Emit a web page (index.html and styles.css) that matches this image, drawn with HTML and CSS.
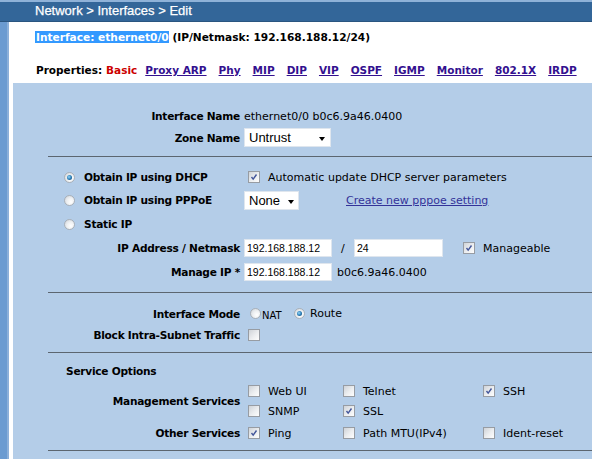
FILE: index.html
```html
<!DOCTYPE html>
<html>
<head>
<meta charset="utf-8">
<link rel="stylesheet" href="styles.css">
</head>
<body>
<div class="topbar">Network &gt; Interfaces &gt; Edit</div>
<div class="main">
  <div class="strip"></div>
  <div class="content">
    <div class="heading"><span class="sel">Interface: ethernet0/0</span> (IP/Netmask: 192.168.188.12/24)</div>
    <div class="props">
      <span class="plabel">Properties:</span>
      <span class="cur">Basic</span>
      <a class="plink">Proxy ARP</a>
      <a class="plink">Phy</a>
      <a class="plink">MIP</a>
      <a class="plink">DIP</a>
      <a class="plink">VIP</a>
      <a class="plink">OSPF</a>
      <a class="plink">IGMP</a>
      <a class="plink">Monitor</a>
      <a class="plink">802.1X</a>
      <a class="plink">IRDP</a>
    </div>
    <div class="panel">
      <div class="sec sec1">
        <div class="row h22"><div class="lbl">Interface Name</div><div class="ctl">ethernet0/0 b0c6.9a46.0400</div></div>
        <div class="row h21"><div class="lbl">Zone Name</div><div class="ctl"><span class="select zone">Untrust<span class="arrow"></span></span></div></div>
      </div>
      <div class="sep"></div>
      <div class="sec sec2">
        <div class="row h22"><div class="opt"><span class="radio on"></span><b>Obtain IP using DHCP</b></div><div class="ctl"><span class="cb on"><svg viewBox="0 0 12 12"><path d="M3 6 L5 8.5 L9 3" /></svg></span><span class="cbl">Automatic update DHCP server parameters</span></div></div>
        <div class="row h24"><div class="opt"><span class="radio"></span><b>Obtain IP using PPPoE</b></div><div class="ctl"><span class="select none">None<span class="arrow"></span></span><a class="link">Create new pppoe setting</a></div></div>
        <div class="row h24"><div class="opt"><span class="radio"></span><b>Static IP</b></div><div class="ctl"></div></div>
        <div class="row h24"><div class="lbl">IP Address / Netmask</div><div class="ctl"><span class="input ip">192.168.188.12</span><span class="slash">/</span><span class="input mask">24</span><span class="cb on manage"><svg viewBox="0 0 12 12"><path d="M3 6 L5 8.5 L9 3" /></svg></span><span class="cbl">Manageable</span></div></div>
        <div class="row h24"><div class="lbl">Manage IP *</div><div class="ctl"><span class="input ip">192.168.188.12</span><span class="mac">b0c6.9a46.0400</span></div></div>
      </div>
      <div class="sep"></div>
      <div class="sec sec3">
        <div class="row h21"><div class="lbl">Interface Mode</div><div class="ctl"><span class="radio nat"></span><span class="small">NAT</span><span class="radio on"></span><span class="rl">Route</span></div></div>
        <div class="row h21"><div class="lbl">Block Intra-Subnet Traffic</div><div class="ctl"><span class="cb"></span></div></div>
      </div>
      <div class="sep"></div>
      <div class="sec sec4">
        <div class="title">Service Options</div>
        <div class="row mg"><div class="lbl">Management Services</div>
          <div class="svc">
            <div class="item"><span class="cb"></span><span class="cbl">Web UI</span></div>
            <div class="item"><span class="cb"></span><span class="cbl">Telnet</span></div>
            <div class="item"><span class="cb on"><svg viewBox="0 0 12 12"><path d="M3 6 L5 8.5 L9 3" /></svg></span><span class="cbl">SSH</span></div>
            <div class="item"><span class="cb"></span><span class="cbl">SNMP</span></div>
            <div class="item"><span class="cb on"><svg viewBox="0 0 12 12"><path d="M3 6 L5 8.5 L9 3" /></svg></span><span class="cbl">SSL</span></div>
            <div class="item"></div>
          </div>
        </div>
        <div class="row h24"><div class="lbl">Other Services</div>
          <div class="svc one">
            <div class="item"><span class="cb on"><svg viewBox="0 0 12 12"><path d="M3 6 L5 8.5 L9 3" /></svg></span><span class="cbl">Ping</span></div>
            <div class="item"><span class="cb"></span><span class="cbl">Path MTU(IPv4)</span></div>
            <div class="item"><span class="cb"></span><span class="cbl">Ident-reset</span></div>
          </div>
        </div>
      </div>
      <div class="sep"></div>
    </div>
  </div>
</div>
</body>
</html>
```

FILE: styles.css
```css
* { box-sizing: border-box; }
html, body { margin: 0; padding: 0; }
body {
  width: 592px;
  height: 459px;
  overflow: hidden;
  background: #fff;
  font-family: "DejaVu Sans", Verdana, sans-serif;
  font-size: 11px;
  color: #000;
}
b { font-size: 10.6px; letter-spacing: -0.25px; }
.topbar {
  height: 22px;
  background: #336699;
  border-top: 2px solid #8fb2d8;
  border-bottom: 1px solid #2a5580;
  padding-left: 35px;
  color: #fff;
  font-family: "Liberation Sans", Arial, sans-serif;
  font-size: 13px;
  line-height: 17px;
  -webkit-text-stroke: 0.25px #fff;
}
.main {
  display: flex;
  height: 437px;
}
.strip {
  flex: none;
  width: 9px;
  background: #6b9bd1;
  border-right: 2px solid #8cb0da;
}
.content {
  flex: 1;
  min-width: 0;
  padding-left: 4px;
  display: flex;
  flex-direction: column;
}
.heading {
  padding: 8px 0 0 22px;
  line-height: 14px;
  font-weight: bold;
  font-size: 10.6px;
  white-space: nowrap;
}
.sel {
  background: #3399ff;
  color: #fff;
  padding-left: 1px;
}
.props {
  margin-top: 19px;
  padding-left: 23px;
  line-height: 14px;
  font-weight: bold;
  font-size: 10.5px;
  display: flex;
  gap: 12px;
  white-space: nowrap;
}
.plabel { margin-right: -8px; }
.cur { color: #cc0000; margin-right: -4px; }
.plink { color: #33108f; text-decoration: underline; }
.panel {
  margin-top: 6px;
  flex: 1;
  background: #b4cde8;
}
.sep {
  height: 1px;
  margin-left: 35px;
  background: #5c6670;
}
.sec1 { padding: 22px 0 8px; }
.sec2 { padding: 9px 0 8px; }
.sec3 { padding: 10px 0 7px; }
.sec4 { padding: 8px 0 5px; }
.row {
  display: flex;
  align-items: center;
}
.h21 { height: 21px; }
.h22 { height: 22px; }
.h24 { height: 24px; }
.lbl {
  width: 231px;
  padding-right: 4px;
  text-align: right;
  font-weight: bold;
  font-size: 10.6px;
  letter-spacing: -0.25px;
  flex: none;
}
.ctl {
  display: flex;
  align-items: center;
}
.opt {
  width: 231px;
  flex: none;
  display: flex;
  align-items: center;
  padding-left: 51px;
}
.opt .radio { margin-right: 9px; }
.select {
  position: relative;
  display: inline-block;
  height: 19px;
  background: #fff;
  border: 1px solid #dfe6ee;
  font-family: "Liberation Sans", Arial, sans-serif;
  font-size: 13px;
  line-height: 17px;
  padding-left: 4px;
}
.zone { width: 87px; }
.none { width: 55px; }
.arrow {
  position: absolute;
  right: 5px;
  top: 8px;
  width: 0;
  height: 0;
  border-left: 3.5px solid transparent;
  border-right: 3.5px solid transparent;
  border-top: 4px solid #000;
}
.none .arrow { right: 4px; }
.link {
  margin-left: 47px;
  color: #333399;
  text-decoration: underline;
}
.input {
  display: inline-block;
  height: 18px;
  background: #fff;
  border: 1px solid #dfe6ee;
  font-family: "Liberation Sans", Arial, sans-serif;
  font-size: 10.5px;
  line-height: 16px;
  padding-left: 2px;
}
.ip { width: 88px; }
.mask { width: 89px; }
.slash { width: 22px; padding-left: 9px; }
.mac { margin-left: 5px; }
.cb {
  display: inline-block;
  width: 12px;
  height: 12px;
  flex: none;
  border: 1px solid #979ca3;
  background: linear-gradient(135deg, #cfd3d8 0%, #eceef0 55%, #fdfdfd 100%);
  margin-left: 4px;
}
.cb.manage { margin-left: 20px; }
.cb svg { display: block; width: 10px; height: 10px; }
.cb path { fill: none; stroke: #43569a; stroke-width: 1.7; }
.cbl { margin-left: 8px; }
.radio {
  display: inline-block;
  width: 11px;
  height: 11px;
  flex: none;
  border-radius: 50%;
  border: 1px solid #a9b0b8;
  background: radial-gradient(circle at 65% 65%, #ffffff 0%, #eef0f2 45%, #cdd2d8 100%);
  position: relative;
}
.radio.on::after {
  content: "";
  position: absolute;
  left: 2px;
  top: 2px;
  width: 5px;
  height: 5px;
  border-radius: 50%;
  background: radial-gradient(circle at 40% 40%, #9ad8f8 0%, #2d80ba 50%, #0d3d66 100%);
}
.nat { margin-left: 6px; }
.small { font-size: 10px; width: 33px; padding-left: 1px; margin-top: 3px; }
.rl { margin-left: 5px; }
.title {
  height: 20px;
  line-height: 20px;
  padding-left: 53px;
  font-weight: bold;
  font-size: 10.6px;
  letter-spacing: -0.25px;
}
.mg { height: 40px; }
.svc {
  display: grid;
  grid-template-columns: 95px 140px 100px;
  grid-auto-rows: 20px;
  align-items: center;
}
.svc.one { grid-auto-rows: 24px; }
.item { display: flex; align-items: center; }
```
